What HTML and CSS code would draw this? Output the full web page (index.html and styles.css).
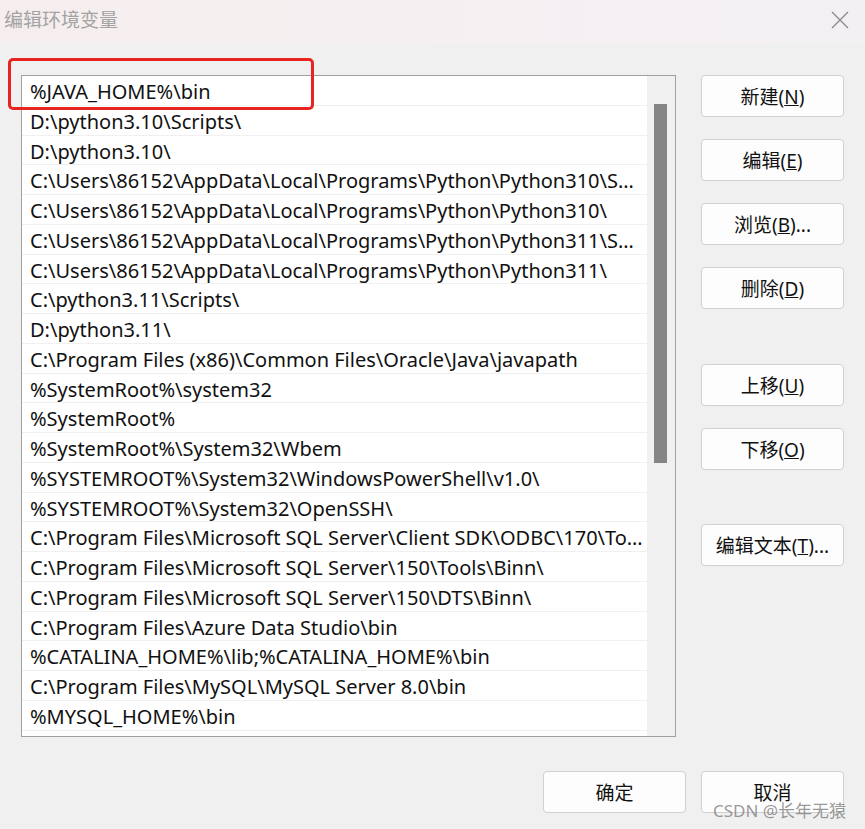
FILE: index.html
```html
<!DOCTYPE html>
<html lang="zh-CN">
  <head>
    <meta charset="UTF-8" />
    <meta name="viewport" content="width=device-width, initial-scale=1.0" />
    <title>编辑环境变量</title>
    <link rel="stylesheet" href="styles.css">
  </head>
  <body>
    <div class="dialog">
      <div class="titlebar">
        <span class="title">编辑环境变量</span>
        <svg class="close" width="18" height="18" viewBox="0 0 18 18">
          <path d="M1 1 L17 17 M17 1 L1 17" stroke="#8a8a8a" stroke-width="1.3" fill="none" />
        </svg>
      </div>

      <div class="main">
        <div class="listbox">
          <ul class="rows">
            <li>%JAVA_HOME%\bin</li>
            <li>D:\python3.10\Scripts\</li>
            <li>D:\python3.10\</li>
            <li>C:\Users\86152\AppData\Local\Programs\Python\Python310\Scripts\</li>
            <li>C:\Users\86152\AppData\Local\Programs\Python\Python310\</li>
            <li>C:\Users\86152\AppData\Local\Programs\Python\Python311\Scripts\</li>
            <li>C:\Users\86152\AppData\Local\Programs\Python\Python311\</li>
            <li>C:\python3.11\Scripts\</li>
            <li>D:\python3.11\</li>
            <li>C:\Program Files (x86)\Common Files\Oracle\Java\javapath</li>
            <li>%SystemRoot%\system32</li>
            <li>%SystemRoot%</li>
            <li>%SystemRoot%\System32\Wbem</li>
            <li>%SYSTEMROOT%\System32\WindowsPowerShell\v1.0\</li>
            <li>%SYSTEMROOT%\System32\OpenSSH\</li>
            <li>C:\Program Files\Microsoft SQL Server\Client SDK\ODBC\170\Tools\Binn\</li>
            <li>C:\Program Files\Microsoft SQL Server\150\Tools\Binn\</li>
            <li>C:\Program Files\Microsoft SQL Server\150\DTS\Binn\</li>
            <li>C:\Program Files\Azure Data Studio\bin</li>
            <li>%CATALINA_HOME%\lib;%CATALINA_HOME%\bin</li>
            <li>C:\Program Files\MySQL\MySQL Server 8.0\bin</li>
            <li>%MYSQL_HOME%\bin</li>
          </ul>
          <div class="scrollbar">
            <div class="thumb"></div>
          </div>
          <div class="highlight"></div>
        </div>

        <div class="actions">
          <button class="btn">新建(<u>N</u>)</button>
          <button class="btn">编辑(<u>E</u>)</button>
          <button class="btn">浏览(<u>B</u>)...</button>
          <button class="btn">删除(<u>D</u>)</button>
          <button class="btn group">上移(<u>U</u>)</button>
          <button class="btn">下移(<u>O</u>)</button>
          <button class="btn group">编辑文本(<u>T</u>)...</button>
        </div>
      </div>

      <div class="footer">
        <button class="btn">确定</button>
        <button class="btn">取消</button>
      </div>

      <div class="watermark">CSDN @长年无猿</div>
    </div>
  </body>
</html>
```

FILE: styles.css
```css
body {
  margin: 0;
  font-family: "Noto Sans", "Noto Sans CJK SC", sans-serif;
  background-color: #f0f0f0;
  color: #111;
}
.dialog {
  position: relative;
  width: 865px;
  height: 829px;
  overflow: hidden;
  background-color: #f0f0f0;
}
.titlebar {
  height: 43px;
  display: flex;
  align-items: center;
  justify-content: space-between;
  padding: 0 16px 0 4px;
  background: linear-gradient(to right, #f6eeee, #f3f0f4);
}
.title {
  font-size: 19px;
  color: #a3a3a3;
  margin-top: -6px;
}
.close {
  margin-top: -4px;
}
.main {
  display: flex;
  padding: 32px 0 0 21px;
}
.listbox {
  position: relative;
  display: flex;
  width: 653px;
  height: 660px;
  border: 1px solid #a0a0a0;
  background-color: #fff;
}
.rows {
  list-style: none;
  margin: 0;
  padding: 0;
  width: 625px;
}
.rows li {
  height: 29.76px;
  line-height: 31px;
  box-sizing: border-box;
  border-bottom: 1px solid #f0f0f0;
  padding: 0 4px 0 8px;
  font-size: 20px;
  white-space: nowrap;
  overflow: hidden;
  text-overflow: ellipsis;
}
.scrollbar {
  width: 28px;
  background-color: #f0f0f0;
  padding: 28px 0 0 7px;
  box-sizing: border-box;
}
.thumb {
  width: 13px;
  height: 359px;
  background-color: #858585;
}
.highlight {
  position: absolute;
  left: -14px;
  top: -18px;
  width: 300px;
  height: 46px;
  border: 3px solid #e82420;
  border-radius: 5px;
}
.actions {
  display: flex;
  flex-direction: column;
  margin-left: 25px;
  gap: 22px;
}
.btn {
  width: 143px;
  height: 42px;
  border: 1px solid #d0d0d0;
  border-radius: 4px;
  background-color: #fdfdfd;
  font-family: "Noto Sans", "Noto Sans CJK SC", sans-serif;
  font-size: 19px;
  color: #111;
  padding: 0;
}
.actions .group {
  margin-top: 33px;
}
.actions .btn:last-child {
  margin-top: 32px;
}
.footer {
  display: flex;
  justify-content: flex-end;
  gap: 15px;
  padding: 34px 21px 0 0;
}
.watermark {
  position: absolute;
  left: 713px;
  top: 797px;
  font-size: 17px;
  color: rgba(120, 120, 120, 0.75);
}
```
